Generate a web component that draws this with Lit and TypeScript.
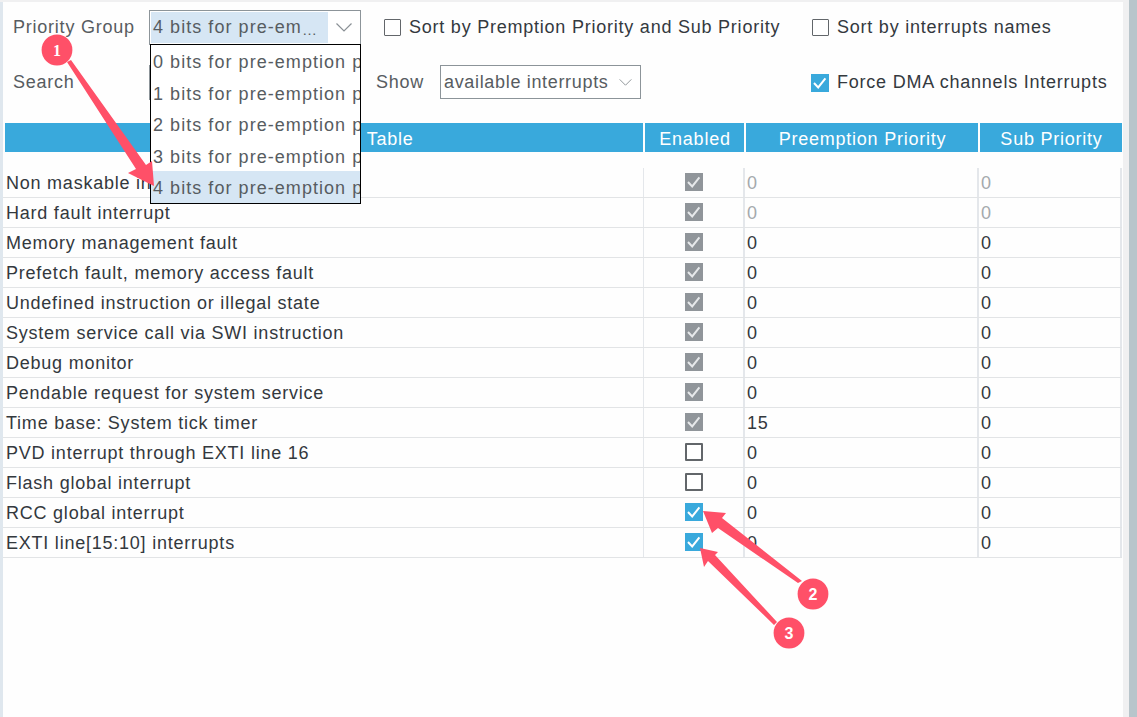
import { LitElement, html, css, svg } from "lit";
import { customElement } from "lit/decorators.js";

type Row = { name: string; state: "locked" | "off" | "on"; pre: string; sub: string; dim?: boolean };

const ROWS: Row[] = [
  { name: "Non maskable interrupt", state: "locked", pre: "0", sub: "0", dim: true },
  { name: "Hard fault interrupt", state: "locked", pre: "0", sub: "0", dim: true },
  { name: "Memory management fault", state: "locked", pre: "0", sub: "0" },
  { name: "Prefetch fault, memory access fault", state: "locked", pre: "0", sub: "0" },
  { name: "Undefined instruction or illegal state", state: "locked", pre: "0", sub: "0" },
  { name: "System service call via SWI instruction", state: "locked", pre: "0", sub: "0" },
  { name: "Debug monitor", state: "locked", pre: "0", sub: "0" },
  { name: "Pendable request for system service", state: "locked", pre: "0", sub: "0" },
  { name: "Time base: System tick timer", state: "locked", pre: "15", sub: "0" },
  { name: "PVD interrupt through EXTI line 16", state: "off", pre: "0", sub: "0" },
  { name: "Flash global interrupt", state: "off", pre: "0", sub: "0" },
  { name: "RCC global interrupt", state: "on", pre: "0", sub: "0" },
  { name: "EXTI line[15:10] interrupts", state: "on", pre: "0", sub: "0" },
];

const OPTIONS = [0, 1, 2, 3, 4].map((n) => `${n} bits for pre-emption p`);

const chevron = html`<svg class="chev" viewBox="0 0 16 9"><polyline points="0.5,0.5 8,8 15.5,0.5"></polyline></svg>`;
const tick = html`<svg class="tick" viewBox="0 0 18 18"><polyline points="3,9 7.2,13.4 14.4,4.4"></polyline></svg>`;

@customElement("app-root")
export class AppRoot extends LitElement {
  static styles = css`
    :host {
      display: block;
      width: 1137px;
      height: 717px;
      font-family: "Liberation Sans", Arial, sans-serif;
      font-size: 18px;
      letter-spacing: 0.77px;
      color: #3a3f45;
      overflow: hidden;
    }
    .frame {
      position: relative;
      display: flex;
      width: 1137px;
      height: 717px;
      background: #f0f0f1;
    }
    .panel {
      flex: none;
      box-sizing: border-box;
      width: 1123px;
      height: 715px;
      margin-top: 2px;
      background: #fefefe;
      border-left: 3px solid #dfe7ee;
    }
    .gutter {
      flex: none;
      width: 6px;
    }
    .rail {
      flex: none;
      width: 8px;
      background: #b8c5cb;
    }
    .toolbar {
      display: grid;
      grid-template-columns: 136px 212px 15px 64px 196px 171px auto;
      grid-template-rows: 36px 36px;
      row-gap: 19px;
      padding: 7px 0 0 10px;
      align-items: center;
      color: #575c61;
    }
    .text-low {
      padding-top: 1px;
    }
    .select {
      box-sizing: border-box;
      display: flex;
      align-items: center;
      height: 35px;
      border: 1px solid #8c9499;
      background: #fff;
    }
    .select .value {
      align-self: stretch;
      display: flex;
      align-items: center;
      box-sizing: border-box;
      width: 177px;
      margin: 1px 0 1px 1px;
      padding: 1px 0 0 2px;
      background: #d6e6f4;
      white-space: nowrap;
      letter-spacing: 1.05px;
    }
    .ell {
      font-size: 15px;
      letter-spacing: 0;
      padding-top: 3px;
    }
    .chev {
      flex: none;
      width: 16px;
      height: 9px;
      margin-left: 8px;
      fill: none;
      stroke: #8a9095;
      stroke-width: 1.2;
    }
    .search {
      box-sizing: border-box;
      height: 35px;
      border: 1px solid #8c9499;
      background: #fff;
    }
    .show {
      grid-column: 5;
      box-sizing: border-box;
      display: flex;
      align-items: center;
      width: 201px;
      height: 34px;
      padding: 1px 0 0 3px;
      border: 1px solid #8c9499;
      background: #fff;
      white-space: nowrap;
      letter-spacing: 0.67px;
    }
    .show .chev {
      width: 15px;
      height: 7px;
      margin-left: 10px;
    }
    .show-label {
      grid-column: 4;
      justify-self: start;
      padding-top: 1px;
    }
    .opt {
      display: flex;
      align-items: center;
      gap: 8px;
      white-space: nowrap;
      color: #34393e;
    }
    .sort-a {
      grid-column: 3 / span 3;
      padding-left: 23px;
    }
    .sort-b {
      grid-column: 7;
      padding-left: 5px;
    }
    .force {
      grid-column: 7;
      padding: 1px 0 0 4px;
      gap: 8px;
    }
    .box {
      flex: none;
      box-sizing: border-box;
      width: 18px;
      height: 18px;
      border: 2px solid #62666a;
      background: #fff;
      border-radius: 1px;
    }
    .box.thin {
      width: 17px;
      height: 17px;
      border-width: 1.5px;
    }
    .box.locked {
      border: 0;
      background: #90959a;
      border-radius: 0;
    }
    .box.on {
      border: 0;
      background: #39a9dc;
      border-radius: 0;
    }
    .tick {
      display: block;
      width: 18px;
      height: 18px;
      fill: none;
      stroke: #fff;
      stroke-width: 2;
    }
    .locked .tick {
      stroke: #e6e8ea;
    }
    .head {
      display: grid;
      grid-template-columns: 638px 99px 232px 142px;
      column-gap: 2px;
      height: 29px;
      margin: 23px 0 0 2px;
      color: #fff;
    }
    .head div {
      display: flex;
      align-items: center;
      justify-content: center;
      box-sizing: border-box;
      padding: 3px 0 0 1px;
      background: #39a9dc;
      white-space: nowrap;
    }
    .body {
      margin-top: 16px;
      width: 1119px;
    }
    .row {
      box-sizing: border-box;
      display: grid;
      grid-template-columns: 641px 101px 234px 143px;
      height: 30px;
      border-bottom: 1px solid #e2e4e6;
      color: #33383d;
      white-space: nowrap;
    }
    .cell {
      box-sizing: border-box;
      display: flex;
      align-items: center;
      overflow: hidden;
      padding: 2px 0 0 3px;
      border-right: 1px solid #e4e7eb;
    }
    .cell.enabled {
      justify-content: center;
      padding: 0 0 1px 1px;
      border-right-width: 2px;
    }
    .cell.pre {
      padding-left: 2px;
      border-right-width: 2px;
    }
    .cell.sub {
      border-right-width: 2px;
      padding-left: 2px;
    }
    .dim {
      color: #a4a9ad;
    }
    .popup {
      position: absolute;
      left: 150px;
      top: 44px;
      box-sizing: border-box;
      width: 211px;
      height: 160px;
      border: 1px solid #000;
      background: #fff;
      color: #575c61;
      overflow: hidden;
      letter-spacing: 1.05px;
    }
    .popup div {
      box-sizing: border-box;
      height: 31.6px;
      line-height: 35px;
      padding-left: 2px;
      white-space: nowrap;
    }
    .popup .sel {
      background: #d6e6f4;
    }
    .marks {
      position: absolute;
      left: 0;
      top: 0;
      width: 1137px;
      height: 717px;
      pointer-events: none;
    }
    .marks polygon,
    .marks circle {
      fill: #ff5068;
    }
    .marks text {
      fill: #fff;
      font-family: "Liberation Sans", sans-serif;
      font-size: 16px;
      font-weight: 700;
      letter-spacing: 0;
      text-anchor: middle;
    }
    .marks text.serif {
      font-family: "Liberation Serif", serif;
    }
  `;

  private mark(x: number, y: number, n: number) {
    return svg`<circle cx=${x} cy=${y} r="15.4"></circle><text class=${n === 1 ? "serif" : ""} x=${x} y=${y + 6}>${n}</text>`;
  }

  render() {
    return html`
      <div class="frame">
        <div class="panel">
          <div class="toolbar">
            <span>Priority Group</span>
            <div class="select"><span class="value">4 bits for pre-em<span class="ell">…</span></span>${chevron}</div>
            <label class="opt sort-a"><span class="box thin"></span>Sort by Premption Priority and Sub Priority</label>
            <label class="opt sort-b"><span class="box thin"></span>Sort by interrupts names</label>
            <span class="text-low">Search</span>
            <div class="search"></div>
            <span class="show-label">Show</span>
            <div class="show">available interrupts${chevron}</div>
            <label class="opt force"><span class="box on">${tick}</span>Force DMA channels Interrupts</label>
          </div>
          <div class="head">
            <div>NVIC Interrupt Table</div>
            <div>Enabled</div>
            <div>Preemption Priority</div>
            <div>Sub Priority</div>
          </div>
          <div class="body">
            ${ROWS.map(
              (r) => html`
                <div class="row">
                  <div class="cell name">${r.name}</div>
                  <div class="cell enabled">
                    <span class="box ${r.state}">${r.state === "off" ? "" : tick}</span>
                  </div>
                  <div class="cell pre ${r.dim ? "dim" : ""}">${r.pre}</div>
                  <div class="cell sub ${r.dim ? "dim" : ""}">${r.sub}</div>
                </div>
              `
            )}
          </div>
        </div>
        <div class="gutter"></div>
        <div class="rail"></div>
        <div class="popup">
          ${OPTIONS.map((o, i) => html`<div class=${i === 4 ? "sel" : ""}>${o}</div>`)}
        </div>
        <svg class="marks" viewBox="0 0 1137 717">
          <polygon points="71,60 146,165 152,161 154,186 128,173 136,169 67,62"></polygon>
          <polygon points="703,511 726,513 722,518 802,581 798,583 718,528 712,533"></polygon>
          <polygon points="700,548 718,552 715,555 777,622 774,625 708,561 704,567"></polygon>
          ${this.mark(57, 50, 1)} ${this.mark(813, 594, 2)} ${this.mark(789, 633, 3)}
        </svg>
      </div>
    `;
  }
}
